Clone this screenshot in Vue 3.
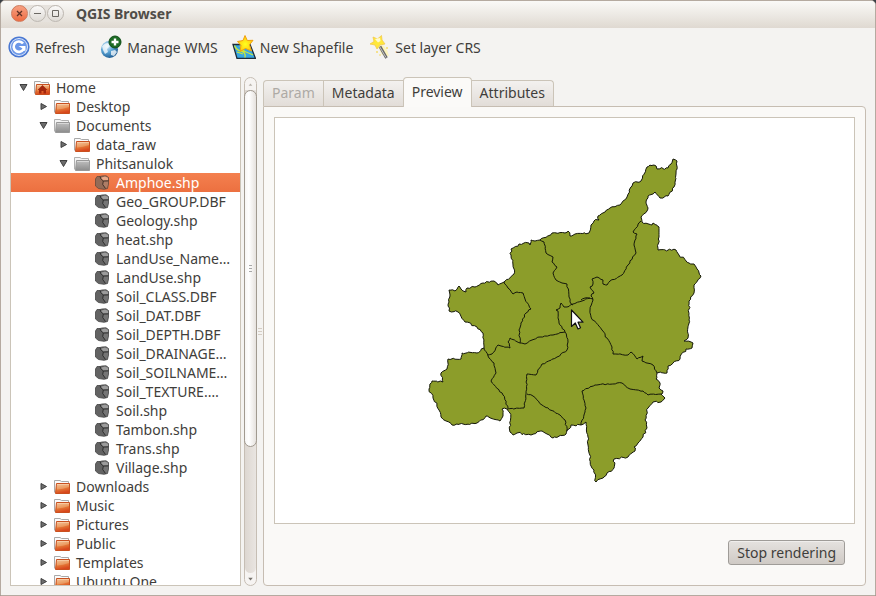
<script setup>
import { ref } from 'vue'

const rows = ref([
  { name: 'Home', level: 0, icon: 'home', open: true },
  { name: 'Desktop', level: 1, icon: 'folder', open: false },
  { name: 'Documents', level: 1, icon: 'opened', open: true },
  { name: 'data_raw', level: 2, icon: 'folder', open: false },
  { name: 'Phitsanulok', level: 2, icon: 'opened', open: true },
  ...[
    'Amphoe.shp', 'Geo_GROUP.DBF', 'Geology.shp', 'heat.shp', 'LandUse_Name…',
    'LandUse.shp', 'Soil_CLASS.DBF', 'Soil_DAT.DBF', 'Soil_DEPTH.DBF',
    'Soil_DRAINAGE…', 'Soil_SOILNAME…', 'Soil_TEXTURE.…', 'Soil.shp',
    'Tambon.shp', 'Trans.shp', 'Village.shp',
  ].map((name) => ({ name, level: 3, icon: 'layer' })),
  { name: 'Downloads', level: 1, icon: 'folder', open: false },
  { name: 'Music', level: 1, icon: 'folder', open: false },
  { name: 'Pictures', level: 1, icon: 'folder', open: false },
  { name: 'Public', level: 1, icon: 'folder', open: false },
  { name: 'Templates', level: 1, icon: 'folder', open: false },
  { name: 'Ubuntu One', level: 1, icon: 'folder', open: false },
])
const selected = ref('Amphoe.shp')

const tabs = ['Param', 'Metadata', 'Preview', 'Attributes']
const activeTab = ref('Preview')

const outline = `449,290 455,291 459,286 461,289 466,292 467,288 475,287 483,283 494,281 498,285 504,282
514,274 513,265 511,255 511,249 519,244 529,243 530,245 531,240 535,241 540,240 552,233 565,233 568,231
570,236 575,234 589,233 591,225 594,221 599,220 598,216 610,208 620,205 627,197 633,183 641,181 647,167
650,165 654,165 657,169 668,168 671,164 673,159 677,161 677,169 676,174 674,187 668,196 660,198 655,192
648,196 646,202 648,208 641,217 642,222 652,225 653,223 659,227 659,237 658,250 676,250 679,255 689,263
694,264 697,269 701,276 694,285 694,293 689,301 689,320 688,338 684,341 693,343 692,348 686,349 680,359
668,366 667,373 657,373 656,379 660,383 659,388 663,391 661,394 665,398 661,402 653,402 648,408 645,420
647,428 643,437 638,443 634,447 635,451 628,457 614,459 614,468 607,473 603,478 596,482 594,470 591,466
588,445 588,437 586,422 581,425 571,425 569,429 567,430 566,434 553,438 547,434 542,431 531,435 517,433
513,435 510,432 510,413 507,409 502,409 503,416 500,421 486,416 477,423 463,424 452,425 441,417 439,410
433,398 429,389 432,381 443,382 441,373 447,369 448,359 461,359 462,353 477,353 484,348 483,333 477,327
465,322 458,312 449,311 449,302 450,295 449,290`

const borders = [
  '504,282 508,288 513,294 517,292 523,293 525,299 531,309 526,313 521,323 519,330 520,343',
  '540,240 544,242 546,253 553,257 552,262 557,267 553,273 556,280 562,283 567,284 569,297 570,302 573,305',
  '590,298 582,301 573,304 567,307 564,307 561,303 560,308 556,310 558,311 559,323 565,332 568,342 567,350 557,357 542,364 536,375 527,374 526,394 524,408 507,409',
  '565,332 553,335 540,337 532,340 525,344 520,343 510,338 508,342 510,348 498,345 492,354 488,355',
  '484,348 489,358 494,363 496,373 491,381 503,395 508,408',
  '527,394 533,396 542,405 560,415 565,420 567,431',
  '641,221 633,232 637,234 634,245 636,253 628,265 622,275 610,281 607,285 603,284 603,280 597,277 592,279 593,284 590,287 594,293 591,296 593,300 590,310 591,317 602,330 612,347 613,354 628,355 631,352 637,359 643,356 642,361 653,365 657,373',
  '581,425 585,412 586,408 582,391 595,385 622,383 630,389 643,391 648,395 661,394',
  '581,300 585,298 593,299',
]

// Adds survey-like detail between the digitised vertices.
function roughen(points, size) {
  const pts = points.trim().split(/\s+/).map((p) => p.split(',').map(Number))
  let seed = 11
  const noise = () => {
    seed = (seed * 16807) % 2147483647
    return seed / 2147483647 - 0.5
  }
  const out = [pts[0]]
  for (let i = 1; i < pts.length; i++) {
    const [ax, ay] = pts[i - 1]
    const [bx, by] = pts[i]
    const steps = Math.max(1, Math.round(Math.hypot(bx - ax, by - ay) / 2.4))
    for (let s = 1; s < steps; s++) {
      const t = s / steps
      out.push([ax + (bx - ax) * t + noise() * size, ay + (by - ay) * t + noise() * size])
    }
    out.push([bx, by])
  }
  return 'M' + out.map(([x, y]) => `${x.toFixed(1)} ${y.toFixed(1)}`).join('L')
}

const outlinePath = roughen(outline, 2) + 'Z'
const borderPaths = borders.map((b) => roughen(b, 1.3))
</script>

<template>
  <div class="window">
    <svg class="defs" width="0" height="0" aria-hidden="true">
      <defs>
        <linearGradient id="orange" x1="0" y1="0" x2="0.3" y2="1">
          <stop offset="0" stop-color="#f0b98a" />
          <stop offset="0.5" stop-color="#e8873f" />
          <stop offset="1" stop-color="#d8471c" />
        </linearGradient>
        <linearGradient id="grey" x1="0" y1="0" x2="0" y2="1">
          <stop offset="0" stop-color="#c0c0c0" />
          <stop offset="1" stop-color="#8c8c8c" />
        </linearGradient>
        <radialGradient id="globe" cx="0.35" cy="0.3" r="0.8">
          <stop offset="0" stop-color="#e4f2fb" />
          <stop offset="0.45" stop-color="#5ba4d6" />
          <stop offset="1" stop-color="#134f86" />
        </radialGradient>
        <radialGradient id="star" cx="0.5" cy="0.55" r="0.5">
          <stop offset="0" stop-color="#ffff20" />
          <stop offset="1" stop-color="#ffc80a" />
        </radialGradient>
        <symbol id="folder" viewBox="0 0 16 16">
          <path d="M.5 13.500V1.500H6L7.500 2.500H14.500V4" fill="#fafafa" stroke="#a9a9a9" />
          <path d="M2.500 4.500H15.500V14.500H1.500Z" fill="url(#orange)" stroke="#c9501f" />
          <path d="M3 5.500H15V8Q9 10 3 10.500Z" fill="#fff" fill-opacity=".2" />
          <path d="M3 5.500H15" stroke="#fbd7b4" stroke-width=".7" />
        </symbol>
        <symbol id="opened" viewBox="0 0 16 16">
          <path d="M.5 13.500V1.500H6L7.500 2.500H14.500V4" fill="#f4f4f4" stroke="#b0b0b0" />
          <path d="M2.500 4.500H15.500V14.500H1.500Z" fill="url(#grey)" stroke="#989898" />
          <path d="M3 5.500H15" stroke="#dedede" stroke-width=".8" />
        </symbol>
        <symbol id="home" viewBox="0 0 16 16">
          <use href="#folder" />
          <path d="M8.500 5 3.500 10H5V13.500H7.500V11H9.500V13.500H12V10H13.500Z" fill="#a3260d" />
        </symbol>
        <symbol id="layer" viewBox="0 0 16 16">
          <path d="M3 1.500H6L8 1 12 .8 14.500 2.500V9L13.500 13.500 10 14.300 4.500 13.500 1.500 11V4Z" fill="#636363" stroke="#454545" stroke-width=".8" />
          <path d="M7.500 2.500 11 1.500 14 2.800V5.500H9.500L7 4Z" fill="#9c9c9c" />
          <path d="M9.500 6.500H14V9L13 12.500 11.500 13 9 9.500Z" fill="#757575" />
          <path d="M6 1.500 7 4 9.500 6 14.500 5.800M9.300 6 8.700 9.500 11.500 13.500" fill="none" stroke="#292929" stroke-width=".9" />
        </symbol>
      </defs>
    </svg>

    <header class="titlebar">
      <div class="controls">
        <button class="round close" aria-label="Close">
          <svg viewBox="0 0 17 17"><path d="M6 6 11 11M11 6 6 11" /></svg>
        </button>
        <button class="round" aria-label="Minimize">
          <svg viewBox="0 0 17 17"><path d="M5 8.500H12" /></svg>
        </button>
        <button class="round" aria-label="Maximize">
          <svg viewBox="0 0 17 17"><path d="M5.500 5.500H11.500V11.500H5.500Z" /></svg>
        </button>
      </div>
      <h1>QGIS Browser</h1>
    </header>

    <nav class="toolbar">
      <button class="tool">
        <svg viewBox="0 0 24 24">
          <circle cx="12" cy="12" r="9.800" fill="#dfe9fb" stroke="#4a78d2" stroke-width="1.600" />
          <circle cx="12" cy="12" r="8" fill="#6b97e8" />
          <path d="M16 8.500A5.200 5.200 0 1 0 16.500 14" fill="none" stroke="#fff" stroke-width="2.600" />
          <path d="M11.500 11H18.500V15.500L15 16.500 15.500 13.500Z" fill="#fff" />
        </svg>
        <span>Refresh</span>
      </button>
      <button class="tool">
        <svg viewBox="0 0 24 24">
          <circle cx="10.500" cy="14.500" r="8.500" fill="url(#globe)" />
          <path d="M3 11Q6 8 9 8L11 11 8 14 9 17 6 19 4 15ZM12 16 16 15 18 17 15 21 12 20Z" fill="#f4f9fc" fill-opacity=".8" />
          <circle cx="16" cy="7" r="6" fill="#1c6b24" stroke="#0f4d17" />
          <path d="M16 3.500V10.500M12.500 7H19.500" stroke="#fff" stroke-width="2.400" />
        </svg>
        <span>Manage WMS</span>
      </button>
      <button class="tool">
        <svg viewBox="0 0 24 24">
          <path d="M1 9.500H18L23.500 23.500H5Z" fill="#37a6e3" stroke="#1d2c3a" stroke-width="1.300" />
          <path d="M2.500 10.500Q4 15 9 16T13 22.500M8 10.500Q9 15 14 17T21 20M5 17 11 19" fill="none" stroke="#c9e63c" stroke-width="1.300" />
          <path d="M13 .5 15.300 5.500 21 5.300 17.500 9.800 19.500 16 13.500 13.500 8 16.500 9 10.500 5.500 6.500 11 5.500Z" fill="url(#star)" stroke="#f0a010" stroke-width="1" />
        </svg>
        <span>New Shapefile</span>
      </button>
      <button class="tool">
        <svg viewBox="0 0 24 24">
          <path d="M11 12 16 10 20 15 22 21 15 20Z" fill="#fff3a6" fill-opacity=".7" />
          <path d="M13 11.500 19.500 23" stroke="#666" stroke-width="2.800" />
          <path d="M12.500 11.500 19 22.500" stroke="#c8c8c8" stroke-width="1" />
          <path d="M14.500 .5 15 5 18 9 13 10 10 14 8 10 3 9 7 6.500 6 2 10.500 4Z" fill="#ffe83a" stroke="#f3c94d" stroke-width=".8" />
          <path d="M13 3 13.500 6 11 7.500 8 4Z" fill="#fffbd0" />
          <path d="M9 17H11M10 16V18M19 13H21M20 12V14M12 20H14" stroke="#f6dc6a" />
        </svg>
        <span>Set layer CRS</span>
      </button>
    </nav>

    <main class="body">
      <ul class="tree" role="tree">
        <li
          v-for="row in rows"
          :key="row.name"
          class="row"
          :class="['level-' + row.level, { selected: row.name === selected }]"
          role="treeitem"
          :aria-selected="row.name === selected"
          @click="selected = row.name"
        >
          <span class="twist">
            <svg v-if="row.open === true" viewBox="0 0 9 9"><path d="M1 1.500H8L4.500 7.500Z" /></svg>
            <svg v-else-if="row.open === false" viewBox="0 0 9 9"><path d="M2 1.500V7.500L7.500 4.500Z" /></svg>
          </span>
          <svg class="icon"><use :href="'#' + row.icon" /></svg>
          <span class="name">{{ row.name }}</span>
        </li>
      </ul>

      <div class="scrollbar" role="scrollbar" aria-orientation="vertical" aria-valuenow="0">
        <svg class="step faint" viewBox="0 0 12 12"><path d="M4 8H8L6 5.500Z" /></svg>
        <div class="track">
          <div class="thumb"><i></i><i></i><i></i></div>
        </div>
        <svg class="step" viewBox="0 0 12 12"><path d="M3.500 4.500H8.500L6 7.500Z" /></svg>
      </div>

      <div class="splitter"><i></i><i></i><i></i></div>

      <section class="details">
        <div class="tabs" role="tablist">
          <button
            v-for="tab in tabs"
            :key="tab"
            class="tab"
            :class="{ active: tab === activeTab }"
            role="tab"
            :aria-selected="tab === activeTab"
            :disabled="tab === 'Param'"
            @click="activeTab = tab"
          >{{ tab }}</button>
        </div>
        <div class="panel">
          <div class="canvas">
            <svg viewBox="275 118 579 405" role="img" aria-label="Amphoe.shp">
              <path :d="outlinePath" fill="#8c9d2a" class="edge" />
              <path v-for="(d, i) in borderPaths" :key="i" :d="d" fill="none" class="edge" />
              <path
                d="M571.500 310V326.500L575.300 323 578 329 580.500 327.800 578 322.200H583Z"
                fill="#fff" stroke="#111" stroke-width="1.200" stroke-linejoin="round"
              />
            </svg>
          </div>
          <div class="actions">
            <button class="stop">Stop rendering</button>
          </div>
        </div>
      </section>
    </main>
  </div>
</template>

<style>
body {
  background: #3a3f45;
}
</style>

<style scoped>
.window {
  box-sizing: border-box;
  display: flex;
  flex-direction: column;
  height: 100vh;
  border: 1px solid #b5aaa0;
  border-radius: 5px 5px 0 0;
  overflow: hidden;
  background: #f4f3f1;
  color: #3f3e3b;
  font-family: "Noto Sans", "Open Sans", sans-serif;
  font-size: 14px;
  line-height: 19px;
}
button {
  margin: 0;
  font: inherit;
  color: inherit;
}
.defs {
  position: absolute;
}
.titlebar {
  box-sizing: border-box;
  display: flex;
  align-items: center;
  gap: 12px;
  height: 27px;
  padding: 0 0 2px 10px;
  background: linear-gradient(#faf9f7, #eeebe6 45%, #dfd9d1);
}
.controls {
  display: flex;
  gap: 1px;
  border-radius: 9px;
  background: #e6e2dd;
}
.round {
  box-sizing: border-box;
  width: 17px;
  height: 17px;
  padding: 0;
  border: 1px solid #bcb7b0;
  border-radius: 50%;
  background: linear-gradient(#fbfaf9, #dedad5);
}
.round svg {
  display: block;
  width: 17px;
  height: 17px;
  margin: -1px;
  fill: none;
  stroke: #6b6863;
}
.round.close {
  border-color: #cf7b5d;
  background: linear-gradient(#f7a183, #ee6c42);
}
.round.close svg {
  stroke: #5f3226;
  stroke-width: 1.3;
}
h1 {
  margin: 0;
  font-size: 14px;
  font-weight: 700;
  color: #504d48;
}
.toolbar {
  display: flex;
  gap: 14px;
  padding: 7px 6px 9px;
}
.tool {
  display: flex;
  align-items: center;
  gap: 4px;
  padding: 0;
  border: 0;
  background: none;
  white-space: nowrap;
}
.tool svg {
  width: 24px;
  height: 24px;
}
.body {
  flex: 1;
  min-height: 0;
  display: grid;
  grid-template-columns: 231px 13px 5px minmax(0, 1fr);
  column-gap: 1px;
  padding: 9px;
}
.tree {
  margin: 0;
  padding: 0;
  list-style: none;
  border: 1px solid #cbc4b8;
  background: #fff;
  overflow: hidden;
}
.row {
  display: flex;
  align-items: center;
  height: 19px;
  white-space: nowrap;
}
.level-1 {
  padding-left: 20px;
}
.level-2 {
  padding-left: 40px;
}
.level-3 {
  padding-left: 60px;
}
.row.selected {
  background: linear-gradient(#f4804f, #ec7040);
  color: #fff;
}
.row.selected .icon {
  filter: sepia(0.7) saturate(2) hue-rotate(-25deg);
}
.twist {
  box-sizing: border-box;
  display: flex;
  justify-content: center;
  width: 23px;
  padding-left: 2px;
}
.twist svg {
  width: 9px;
  height: 9px;
  fill: #6d6d6d;
  stroke: #3f3f3f;
}
.icon {
  width: 16px;
  height: 16px;
  margin-right: 6px;
}
.scrollbar {
  box-sizing: border-box;
  display: flex;
  flex-direction: column;
  width: 13px;
  margin-left: 2px;
  border: 1px solid #c6beb4;
  border-radius: 7px;
  background: #f6f4f2;
}
.step {
  width: 11px;
  height: 12px;
  fill: #77736d;
}
.step.faint {
  fill: #b9b4ad;
}
.track {
  flex: 1;
  background: linear-gradient(90deg, #ddd7d1, #e9e5e1);
  border-radius: 0 0 6px 6px;
}
.thumb {
  box-sizing: border-box;
  height: 74%;
  margin: 0 -1px;
  border: 1px solid #a19a90;
  border-radius: 7px;
  background: linear-gradient(90deg, #f7f6f5, #fff 35%, #e6e2de);
}
.thumb,
.splitter {
  display: flex;
  flex-direction: column;
  align-items: center;
  justify-content: center;
  gap: 2px;
}
.thumb i,
.splitter i {
  width: 3px;
  height: 1px;
  background: #a8a8a8;
}
.splitter {
  margin-left: 2px;
}
.splitter i {
  width: 4px;
  background: #d5cdc4;
}
.details {
  display: flex;
  flex-direction: column;
  min-width: 0;
  margin-left: 1px;
}
.tabs {
  display: flex;
  align-items: flex-end;
  height: 29px;
}
.tab {
  height: 26px;
  padding: 0 8px 2px;
  border: 1px solid #cbc4b8;
  border-bottom: 0;
  border-left-width: 0;
  background: linear-gradient(#f3f1ef, #e2ddd8);
}
.tab:first-child {
  border-left-width: 1px;
  border-radius: 4px 0 0 0;
}
.tab:last-child {
  border-radius: 0 4px 0 0;
}
.tab:disabled {
  color: #aeaaa5;
}
.tab.active {
  position: relative;
  height: 30px;
  margin-bottom: -1px;
  margin-left: -1px;
  border-left-width: 1px;
  border-radius: 4px 4px 0 0;
  background: #fbfaf8;
}
.panel {
  flex: 1;
  min-height: 0;
  display: flex;
  flex-direction: column;
  gap: 16px;
  padding: 10px;
  border: 1px solid #c6bdb2;
  border-radius: 0 4px 4px 4px;
  background: #faf9f7;
}
.canvas {
  flex: 1;
  min-height: 0;
  border: 1px solid #cbc4b8;
  background: #fff;
}
.canvas svg {
  display: block;
  width: 100%;
  height: 100%;
}
.edge {
  stroke: #15180a;
  stroke-width: 1;
  stroke-linejoin: round;
}
.actions {
  display: flex;
  justify-content: flex-end;
  padding: 0 10px 10px 0;
}
.stop {
  height: 25px;
  padding: 0 8px;
  border: 1px solid #9f9c98;
  border-radius: 3px;
  background: linear-gradient(#e5e2df, #cfcac5);
  box-shadow: inset 0 1px #f0eeec;
}
</style>
